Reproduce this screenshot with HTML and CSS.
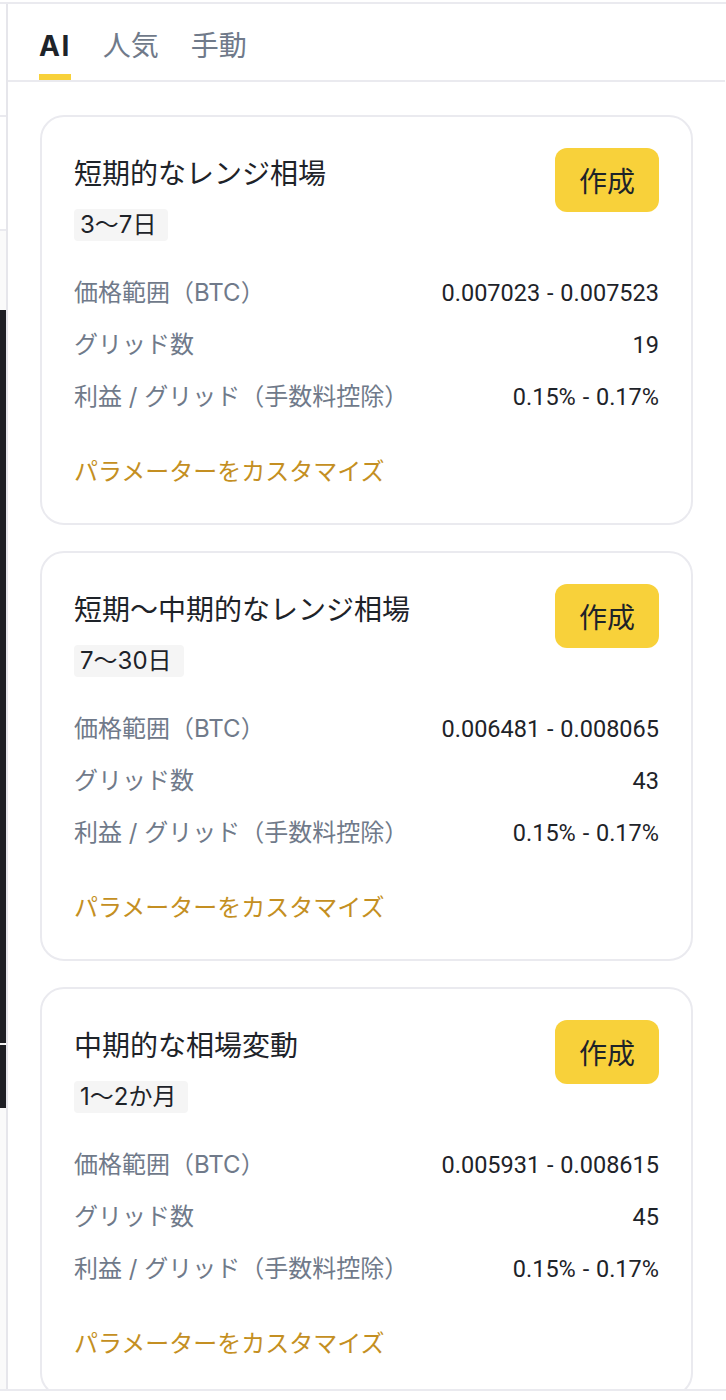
FILE: index.html
```html
<!DOCTYPE html>
<html lang="ja">
<head>
<meta charset="utf-8">
<title>グリッド</title>
<link rel="stylesheet" href="styles.css">
</head>
<body>
<div class="page">
  <aside class="strip">
    <div class="seg seg-a"></div>
    <div class="seg seg-b"></div>
    <div class="seg seg-c"></div>
    <div class="seg seg-dark"></div>
    <div class="seg seg-line"></div>
    <div class="seg seg-dark2"></div>
    <div class="seg seg-rest"></div>
  </aside>
  <main class="panel">
    <nav class="tabs">
      <span class="tab active">AI</span>
      <span class="tab">人気</span>
      <span class="tab">手動</span>
    </nav>
    <div class="list">
      <section class="card">
        <div class="card-head">
          <div class="head-left">
            <h2 class="title">短期的なレンジ相場</h2>
            <span class="badge">3〜7日</span>
          </div>
          <button class="create">作成</button>
        </div>
        <dl class="rows">
          <div class="row"><dt>価格範囲（BTC）</dt><dd>0.007023 - 0.007523</dd></div>
          <div class="row"><dt>グリッド数</dt><dd>19</dd></div>
          <div class="row"><dt>利益 / グリッド（手数料控除）</dt><dd>0.15% - 0.17%</dd></div>
        </dl>
        <a class="custom">パラメーターをカスタマイズ</a>
      </section>
      <section class="card">
        <div class="card-head">
          <div class="head-left">
            <h2 class="title">短期〜中期的なレンジ相場</h2>
            <span class="badge">7〜30日</span>
          </div>
          <button class="create">作成</button>
        </div>
        <dl class="rows">
          <div class="row"><dt>価格範囲（BTC）</dt><dd>0.006481 - 0.008065</dd></div>
          <div class="row"><dt>グリッド数</dt><dd>43</dd></div>
          <div class="row"><dt>利益 / グリッド（手数料控除）</dt><dd>0.15% - 0.17%</dd></div>
        </dl>
        <a class="custom">パラメーターをカスタマイズ</a>
      </section>
      <section class="card">
        <div class="card-head">
          <div class="head-left">
            <h2 class="title">中期的な相場変動</h2>
            <span class="badge">1〜2か月</span>
          </div>
          <button class="create">作成</button>
        </div>
        <dl class="rows">
          <div class="row"><dt>価格範囲（BTC）</dt><dd>0.005931 - 0.008615</dd></div>
          <div class="row"><dt>グリッド数</dt><dd>45</dd></div>
          <div class="row"><dt>利益 / グリッド（手数料控除）</dt><dd>0.15% - 0.17%</dd></div>
        </dl>
        <a class="custom">パラメーターをカスタマイズ</a>
      </section>
    </div>
  </main>
</div>
</body>
</html>
```

FILE: styles.css
```css
* { box-sizing: border-box; }
html, body { margin: 0; padding: 0; background: #fff; }
body {
  font-family: "Inter", "Noto Sans CJK JP", sans-serif;
  color: #1e2329;
}
.page {
  margin-top: 2px;
  height: 1389px;
  display: flex;
  border-top: 2px solid #eaeaef;
  border-bottom: 2px solid #eaeaef;
  overflow: hidden;
}
.strip {
  width: 8px;
  flex: none;
  display: flex;
  flex-direction: column;
  border-right: 2px solid #e6e6eb;
}
.seg { flex: none; }
.seg-a { height: 113px; border-bottom: 2px solid #eaeaef; }
.seg-b { height: 114px; border-bottom: 2px solid #eaeaef; }
.seg-c { height: 79px; background: #fafafa; }
.seg-dark { height: 733px; background: #1e1f24; }
.seg-line { height: 2px; background: #f2f2f2; margin-right: 1px; }
.seg-dark2 { height: 63px; background: #1e1f24; }
.seg-rest { flex: 1; background: #fafafa; }

.panel {
  flex: 1;
  min-width: 0;
  display: flex;
  flex-direction: column;
}
.tabs {
  display: flex;
  gap: 32px;
  padding-left: 31px;
  border-bottom: 2px solid #eaeaef;
  margin-right: 1px;
}
.tab {
  font-size: 28px;
  line-height: 36px;
  padding-top: 24px;
  padding-bottom: 10px;
  border-bottom: 6px solid transparent;
  color: #707a8a;
}
.tab.active {
  font-weight: 700;
  color: #1e2329;
  letter-spacing: 1.5px;
  border-bottom-color: #f8d13a;
}

.list {
  display: flex;
  flex-direction: column;
  gap: 26px;
  padding: 33px 33px 0 32px;
}
.card {
  flex: none;
  border: 2px solid #eaeaef;
  border-radius: 24px;
  padding: 31px 32px 33px 32px;
}
.card-head {
  display: flex;
  justify-content: space-between;
  align-items: flex-start;
}
.head-left {
  display: flex;
  flex-direction: column;
  align-items: flex-start;
  padding-top: 6px;
}
.title {
  margin: 0;
  font-size: 28px;
  font-weight: 400;
  line-height: 40px;
  color: #1e2329;
}
.badge {
  margin-top: 15px;
  height: 32px;
  line-height: 32px;
  padding: 0 12px 0 6px;
  font-size: 24px;
  background: #f5f5f5;
  border-radius: 4px;
  color: #1e2329;
}
.create {
  width: 104px;
  height: 64px;
  border: none;
  border-radius: 12px;
  background: #f8d13a;
  color: #1e2329;
  font-family: "Noto Sans CJK JP", sans-serif;
  font-size: 28px;
  padding: 0;
}
.rows {
  margin: 34px 0 0 0;
  display: flex;
  flex-direction: column;
  gap: 16px;
}
.row {
  display: flex;
  justify-content: space-between;
  font-size: 24px;
  line-height: 36px;
}
.row dt { color: #707a8a; }
.row dd {
  margin: 0;
  color: #1e2329;
  font-family: "Roboto", "Noto Sans CJK JP", sans-serif;
  font-size: 23.5px;
  word-spacing: 1px;
}
.custom {
  display: block;
  margin-top: 39px;
  font-size: 24px;
  line-height: 36px;
  color: #c48f22;
}
```
